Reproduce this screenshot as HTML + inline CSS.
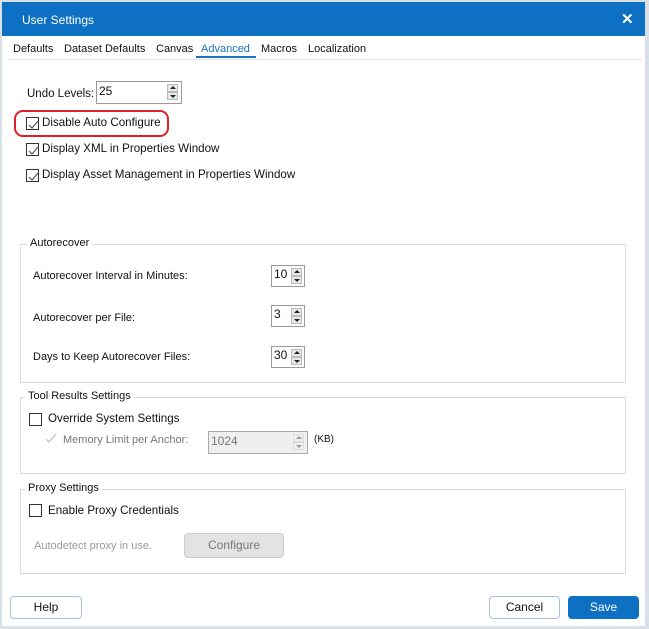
<!DOCTYPE html>
<html><head><meta charset="utf-8"><style>
*{box-sizing:border-box;margin:0;padding:0}
body{width:649px;height:629px;background:#d9e0e8;font-family:"Liberation Sans",sans-serif;font-size:11px;color:#111;position:relative;overflow:hidden}
.a{position:absolute;white-space:nowrap}
#win{position:absolute;left:2px;top:2px;width:643px;height:624px;background:#fff}
#title{position:absolute;left:2px;top:2px;width:643px;height:34px;background:#0d70c3;color:#fff;font-size:12px}
.cb{position:absolute;width:13px;height:13px;border:1px solid #333;background:#fff}
.cb svg{position:absolute;left:1px;top:1px}
.grp{position:absolute;border:1px solid #dcdcdc}
.lg{position:absolute;background:#fff;padding:0 3px;top:-8px;left:6px}
.spin{position:absolute;border:1px solid #999;background:#fff}
.sb{position:absolute;width:11px;height:8px;background:#e8e8e8;border:1px solid #bbb}
.sb.u::after{content:"";position:absolute;left:2px;top:1px;border-left:3px solid transparent;border-right:3px solid transparent;border-bottom:3px solid #222}
.sb.d::after{content:"";position:absolute;left:2px;top:2px;border-left:3px solid transparent;border-right:3px solid transparent;border-top:3px solid #222}
.g .sb.u::after{border-bottom-color:#999}.g .sb.d::after{border-top-color:#999}
.btn{position:absolute;border:1px solid #a9c1dc;border-radius:4px;background:#fff;text-align:center;font-size:12px}
.t{font-size:11.6px}
</style></head><body>
<div id="win"></div>
<div id="title"><span class="a" style="left:20px;top:11px">User Settings</span>
<span class="a" style="left:619px;top:8px;font-weight:bold;font-size:15px">✕</span></div>

<div class="a" style="left:13px;top:43px">Defaults</div>
<div class="a" style="left:64px;top:43px">Dataset Defaults</div>
<div class="a" style="left:156px;top:43px">Canvas</div>
<div class="a" style="left:201px;top:43px;color:#1c72c4">Advanced</div>
<div class="a" style="left:196px;top:56px;width:60px;height:2px;background:#1c72c4"></div>
<div class="a" style="left:261px;top:43px">Macros</div>
<div class="a" style="left:308px;top:43px">Localization</div>
<div class="a" style="left:8px;top:59px;width:634px;height:1px;background:#dde3ea"></div>

<div class="a" style="left:27px;top:88px;font-size:11.5px">Undo Levels:</div>
<div class="spin" style="left:96px;top:81px;width:86px;height:23px"><span class="a" style="left:2px;top:2px;font-size:12px">25</span>
<div class="sb u" style="left:70px;top:2px"></div><div class="sb d" style="left:70px;top:10px"></div></div>

<div class="a" style="left:14px;top:110px;width:155px;height:27px;border:2px solid #e0202a;border-radius:9px"></div>
<div class="cb" style="left:26px;top:117px"><svg width="11" height="11"><path d="M1 6l3 3 6-7" fill="none" stroke="#555" stroke-width="1.2"/></svg></div>
<div class="a t" style="left:42px;top:116px">Disable Auto Configure</div>
<div class="cb" style="left:26px;top:143px"><svg width="11" height="11"><path d="M1 6l3 3 6-7" fill="none" stroke="#555" stroke-width="1.2"/></svg></div>
<div class="a t" style="left:42px;top:142px">Display XML in Properties Window</div>
<div class="cb" style="left:26px;top:169px"><svg width="11" height="11"><path d="M1 6l3 3 6-7" fill="none" stroke="#555" stroke-width="1.2"/></svg></div>
<div class="a t" style="left:42px;top:168px">Display Asset Management in Properties Window</div>

<div class="grp" style="left:20px;top:244px;width:606px;height:139px"><span class="lg">Autorecover</span></div>
<div class="a" style="left:33px;top:270px">Autorecover Interval in Minutes:</div>
<div class="a" style="left:33px;top:312px">Autorecover per File:</div>
<div class="a" style="left:33px;top:351px">Days to Keep Autorecover Files:</div>
<div class="spin" style="left:271px;top:265px;width:34px;height:22px"><span class="a" style="left:2px;top:1px;font-size:12px">10</span><div class="sb u" style="left:19px;top:2px"></div><div class="sb d" style="left:19px;top:10px"></div></div>
<div class="spin" style="left:271px;top:305px;width:34px;height:22px"><span class="a" style="left:2px;top:1px;font-size:12px">3</span><div class="sb u" style="left:19px;top:2px"></div><div class="sb d" style="left:19px;top:10px"></div></div>
<div class="spin" style="left:271px;top:346px;width:34px;height:22px"><span class="a" style="left:2px;top:1px;font-size:12px">30</span><div class="sb u" style="left:19px;top:2px"></div><div class="sb d" style="left:19px;top:10px"></div></div>

<div class="grp" style="left:20px;top:397px;width:606px;height:77px"><span class="lg" style="left:4px">Tool Results Settings</span></div>
<div class="cb" style="left:29px;top:413px"></div>
<div class="a t" style="left:48px;top:412px">Override System Settings</div>
<div class="a" style="left:44px;top:432px"><svg width="14" height="14"><path d="M2 7l3 3 7-8" fill="none" stroke="#bbb" stroke-width="1.2"/></svg></div>
<div class="a" style="left:63px;top:434px;color:#777">Memory Limit per Anchor:</div>
<div class="a g" style="left:208px;top:431px;width:100px;height:23px;background:#efefef;border:1px solid #aaa"><span class="a" style="left:2px;top:2px;color:#777;font-size:12px">1024</span><div class="sb u" style="left:84px;top:2px;background:#f0f0f0;border-color:#ddd"></div><div class="sb d" style="left:84px;top:10px;background:#f0f0f0;border-color:#ddd"></div></div>
<div class="a" style="left:314px;top:434px;font-size:10px">(KB)</div>

<div class="grp" style="left:20px;top:489px;width:606px;height:85px"><span class="lg" style="left:4px">Proxy Settings</span></div>
<div class="cb" style="left:29px;top:504px"></div>
<div class="a t" style="left:48px;top:504px">Enable Proxy Credentials</div>
<div class="a" style="left:34px;top:540px;color:#999">Autodetect proxy in use.</div>
<div class="a" style="left:184px;top:533px;width:100px;height:25px;background:#e3e3e3;border:1px solid #ccc;border-radius:4px;text-align:center;line-height:23px;color:#777;font-size:12px">Configure</div>

<div class="btn" style="left:10px;top:596px;width:72px;height:23px;line-height:21px">Help</div>
<div class="btn" style="left:489px;top:596px;width:71px;height:23px;line-height:21px">Cancel</div>
<div class="btn" style="left:568px;top:596px;width:71px;height:23px;line-height:21px;background:#0d70c3;border-color:#0d70c3;color:#fff">Save</div>
</body></html>
